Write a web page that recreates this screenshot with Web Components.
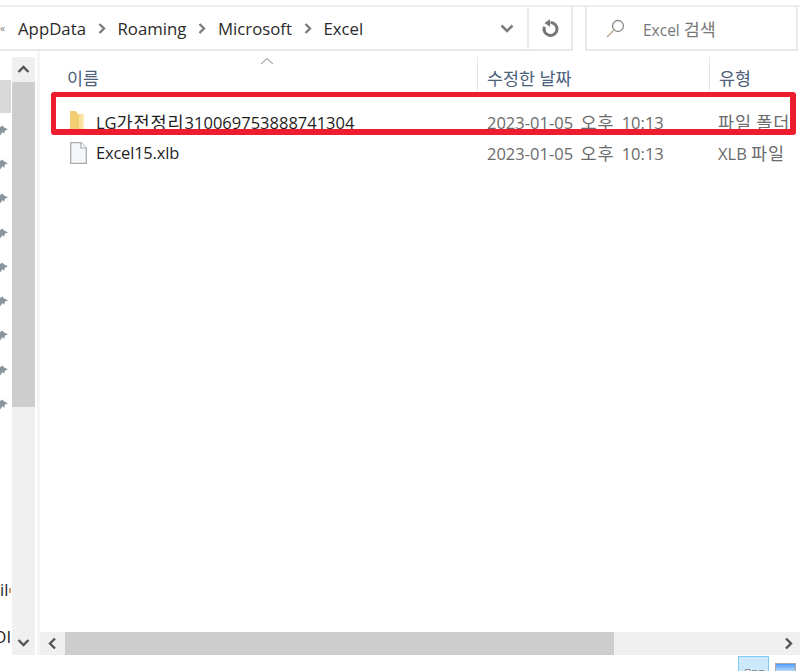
<!DOCTYPE html>
<html lang="ko"><head><meta charset="utf-8"><title>Excel</title>
<style>
html,body{margin:0;padding:0;background:#fff;width:800px;height:671px;overflow:hidden}
body{font-family:"Open Sans","Noto Sans CJK KR",sans-serif;font-size:16px}
</style></head><body>
<fx-window>
  <fx-toolbar slot="top"></fx-toolbar>
  <fx-nav slot="nav"></fx-nav>
  <fx-scrollbar slot="navbar"></fx-scrollbar>
  <fx-list slot="list">
    <fx-row name="LG가전정리310069753888741304" date="2023-01-05 오후 10:13" type="파일 폴더" icon="folder"></fx-row>
    <fx-row name="Excel15.xlb" date="2023-01-05 오후 10:13" type="XLB 파일" icon="file"></fx-row>
  </fx-list>
  <fx-status slot="status"></fx-status>
</fx-window>
<script>
const K='"Open Sans","Noto Sans CJK KR",sans-serif';
const ko=s=>s.replace(/[가-힣]+/g,m=>`<span class="ko">${m}</span>`);
function def(name,html){
  customElements.define(name,class extends HTMLElement{
    constructor(){super();this.attachShadow({mode:'open'}).innerHTML=typeof html==='function'?html(this):html;}
  });
}
def('fx-window',`<style>
:host{display:grid;width:800px;height:671px;grid-template-columns:37px 1fr;grid-template-rows:51px 604px 16px;position:relative;overflow:hidden}
.top{grid-column:1/3}.status{grid-column:1/3}
.left{display:flex;padding-top:6px;box-sizing:border-box;height:604px}
.right{border-left:3px solid #f5f5f5;padding-top:6px;box-sizing:border-box;height:604px;min-width:0}
.mark{position:absolute;left:51px;top:92px;width:745px;height:43px;box-sizing:border-box;border:6px solid #ed1c2e;border-width:5.500px 6px 6.500px 5.500px;border-radius:3px;pointer-events:none}
</style>
<div class="top"><slot name="top"></slot></div>
<div class="left"><slot name="nav"></slot><slot name="navbar"></slot></div>
<div class="right"><slot name="list"></slot></div>
<div class="status"><slot name="status"></slot></div>
<div class="mark"></div>`);

const crumbSep='<span class="sep"><svg width="8" height="11" viewBox="0 0 8 11"><path d="M1.500 1 6 5.500 1.500 10" fill="none" stroke="#7d7d7d" stroke-width="2.400"/></svg></span>';
def('fx-toolbar',`<style>
:host{display:flex;height:51px;box-sizing:border-box;padding-top:5px;font:16.800px ${K};color:#2a2a2a}
.wrap{display:flex;width:100%;border-top:2px solid #efefef;height:46px;box-sizing:border-box;background:#fff}
.addr{width:529px;border-bottom:2px solid #e9e9e9;display:flex;align-items:center;box-sizing:border-box}
.more{width:18px;font-size:10px;color:#777;box-sizing:border-box;letter-spacing:-1px}
.crumb{white-space:nowrap}
.sep{width:31.500px;display:flex;justify-content:center}
.dd{margin-left:auto;width:43px;height:100%;display:flex;align-items:center;justify-content:center;border-right:2px solid #e9e9e9;box-sizing:border-box}
.ref{width:44px;border:2px solid #e9e9e9;border-top:0;border-left:0;display:flex;align-items:center;justify-content:center;box-sizing:border-box}
.gap{width:12px}
.search{width:213px;border:2px solid #e9e9e9;border-top:0;box-sizing:border-box;display:flex;align-items:center;color:#777;font-size:15.500px}
.search svg{margin-left:19px;margin-right:18px}
.ko{font-size:17.400px}
</style><div class="wrap">
<div class="addr"><span class="more">‹‹</span><span class="crumb">AppData</span>${crumbSep}<span class="crumb">Roaming</span>${crumbSep}<span class="crumb">Microsoft</span>${crumbSep}<span class="crumb">Excel</span>
<span class="dd"><svg width="14" height="9" viewBox="0 0 14 9"><path d="M1.500 1.500 7 7 12.500 1.500" fill="none" stroke="#7d7d7d" stroke-width="2.600"/></svg></span></div>
<div class="ref"><svg width="18" height="19" viewBox="0 0 18 19"><path d="M9.500 3.500A6.500 6.500 0 1 1 3.400 7.800" fill="none" stroke="#767676" stroke-width="3"/><path d="M9 .2V7.800L3.500 4z" fill="#767676"/></svg></div>
<div class="gap"></div>
<div class="search"><svg width="19" height="19" viewBox="0 0 19 19"><circle cx="12" cy="7" r="5.500" fill="none" stroke="#8a8a8a" stroke-width="1.300"/><path d="M8 11 1 18" stroke="#bda98c" stroke-width="1.500"/></svg><span>${ko('Excel 검색')}</span></div>
</div>`);

def('fx-nav',()=>{
  const pin='<svg width="8" height="13" viewBox="0 0 8 13"><path d="M0 3 2.500 1.500 3.500 3 8 5.500 5 6.500 4 10 2.500 8 0 11.500 0 6.500z" fill="#8a949c"/></svg>';
  const rows=Array.from({length:9},()=>`<div class="pin">${pin}</div>`).join('');
  return `<style>
:host{display:block;width:11px;height:598px;overflow:hidden;font:16.500px ${K};color:#222;flex:none;margin-right:1px}
.sel{height:33px;margin-top:23px;background:#d9d9d9}
.pin{height:34.300px;display:flex;align-items:center;justify-content:flex-start}
.col{display:flex;flex-direction:column;height:100%}
.t{height:24px;line-height:24px;display:flex;justify-content:flex-end;align-items:center;white-space:nowrap}
.sp{flex:1}
.o{display:block;width:2px;height:5px;background:#d59a63;margin-left:1px}
</style><div class="col"><div class="sel"></div><div>${rows}</div><div class="sp"></div><div class="t" style="margin-bottom:23px"><span>il</span><i class="o"></i></div><div class="t" style="margin-bottom:6px"><span>OI</span></div></div>`;
});

def('fx-scrollbar',`<style>
:host{display:flex;flex-direction:column;width:23px;height:598px;background:#f0f0f0;flex:none}
.b{height:25px;display:flex;align-items:center;justify-content:center;flex:none}
.th{height:325px;background:#cdcdcd;flex:none}
.sp{flex:1}
</style><div class="b"><svg width="13" height="9" viewBox="0 0 13 9"><path d="M1.500 7 6.500 2 11.500 7" fill="none" stroke="#555" stroke-width="2.400"/></svg></div><div class="th"></div><div class="sp"></div><div class="b"><svg width="13" height="9" viewBox="0 0 13 9"><path d="M1.500 2 6.500 7 11.500 2" fill="none" stroke="#555" stroke-width="2.400"/></svg></div>`);

def('fx-list',`<style>
:host{display:flex;flex-direction:column;height:598px;min-width:0;overflow:hidden}
.head{display:grid;grid-template-columns:437px 232px 1fr;height:34px;flex:none;font:17.400px ${K};color:#4c607a;position:relative}
.head div{padding-left:27px;display:flex;align-items:center;padding-top:6px;box-sizing:border-box;white-space:pre}
.head div+div{padding-left:9px;border-left:1px solid #e5e5e5}
.caret{position:absolute;left:220px;top:0}
.rows{flex:1;padding-top:15px;min-height:0}
.h{height:23px;flex:none;background:#f0f0f0;display:flex;align-items:center}
.hb{width:25px;display:flex;justify-content:center;flex:none}
.hth{width:549px;height:100%;background:#cdcdcd;flex:none}
.sp{flex:1}
</style><div class="head"><div>이름</div><div>수정한 날짜</div><div>유형</div>
<svg class="caret" width="14" height="8" viewBox="0 0 14 8"><path d="M1 7 7 1.500 13 7" fill="none" stroke="#aab0b6" stroke-width="1.200"/></svg></div>
<div class="rows"><slot></slot></div>
<div style="height:1px;flex:none"></div>
<div class="h"><span class="hb"><svg width="9" height="13" viewBox="0 0 9 13"><path d="M7 1.500 2 6.500 7 11.500" fill="none" stroke="#555" stroke-width="2.400"/></svg></span><div class="hth"></div><span class="sp"></span><span class="hb" style="width:23px"><svg width="9" height="13" viewBox="0 0 9 13"><path d="M2 1.500 7 6.500 2 11.500" fill="none" stroke="#555" stroke-width="2.400"/></svg></span></div>`);

const icons={
 folder:'<svg width="15" height="20" viewBox="0 0 15 20" style="margin:-2px 0 0 0"><defs><linearGradient id="g" x1="0" x2="1" y1="0" y2="0"><stop offset="0" stop-color="#f6d27a"/><stop offset="1" stop-color="#fdeeb8"/></linearGradient></defs><path d="M0 0H6L7 2V20H0z" fill="#f3cd72"/><path d="M7 3H14V18L7 20z" fill="url(#g)"/><path d="M7.500 2V20" stroke="#e4b75a" stroke-opacity=".6"/></svg>',
 file:'<svg width="17" height="22" viewBox="0 0 17 22"><path d="M.700.700H11L16.300 6V21.300H.700z" fill="#f6f7f9" stroke="#a8acb0" stroke-width="1.300"/><path d="M11 .700V6H16.300" fill="#fff" stroke="#a8acb0" stroke-width="1.200"/></svg>'
};
def('fx-row',el=>`<style>
:host{display:grid;grid-template-columns:437px 232px 1fr;height:31px;align-items:center;white-space:nowrap;font:16.500px ${K}}
.n{display:flex;align-items:center;color:#1f1f1f;padding-left:30px}
.file{letter-spacing:-.2px}
.i{width:26px;display:flex;flex:none}
.d{padding-left:10px;color:#6b6b6b;word-spacing:3px}
.t{padding-left:9px;color:#6b6b6b}
.ko{font-size:17.500px;letter-spacing:.9px;color:inherit}
</style><div class="n ${el.getAttribute('icon')==='file'?'file':''}"><span class="i">${icons[el.getAttribute('icon')]}</span><span>${ko(el.getAttribute('name'))}</span></div><div class="d">${ko(el.getAttribute('date'))}</div><div class="t">${ko(el.getAttribute('type'))}</div>`);

def('fx-status',`<style>
:host{display:flex;justify-content:flex-end;height:16px;overflow:hidden;box-sizing:border-box;padding-top:1px;padding-right:4px;gap:6px}
.v{height:30px;box-sizing:border-box;flex:none}
.a{width:31px;border:1px solid #7fcdf3;background:#cce8fb;padding:7px 0 0 6px}
.b{width:21px;margin-top:7px;border:1px solid #a9a9a9;background:linear-gradient(#4f9df7,#cfe3fb 30%,#4f9df7 60%)}
</style><div class="v a"><svg width="20" height="12" viewBox="0 0 20 12"><path d="M.5.500H5V8H.5z" fill="#fff" stroke="#8c8c8c"/><path d="M7 2H12M14 2H19M7 7H12M14 7H19" stroke="#777" stroke-width="1.300"/></svg></div><div class="v b"></div>`);
</script>
</body></html>
